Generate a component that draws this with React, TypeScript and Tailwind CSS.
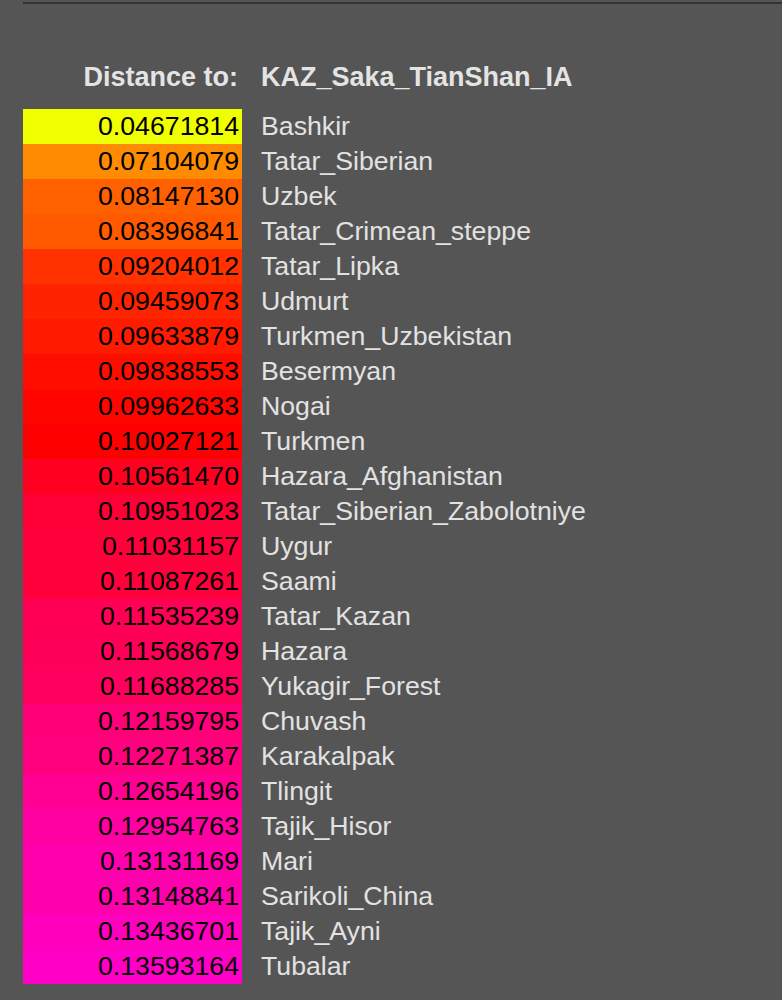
const rows: { value: string; name: string; bg: string }[] = [
  { value: "0.04671814", name: "Bashkir", bg: "bg-[#f0ff00]" },
  { value: "0.07104079", name: "Tatar_Siberian", bg: "bg-[#ff8c00]" },
  { value: "0.08147130", name: "Uzbek", bg: "bg-[#ff6000]" },
  { value: "0.08396841", name: "Tatar_Crimean_steppe", bg: "bg-[#ff5a00]" },
  { value: "0.09204012", name: "Tatar_Lipka", bg: "bg-[#ff3200]" },
  { value: "0.09459073", name: "Udmurt", bg: "bg-[#ff2400]" },
  { value: "0.09633879", name: "Turkmen_Uzbekistan", bg: "bg-[#ff1a00]" },
  { value: "0.09838553", name: "Besermyan", bg: "bg-[#ff0e00]" },
  { value: "0.09962633", name: "Nogai", bg: "bg-[#ff0500]" },
  { value: "0.10027121", name: "Turkmen", bg: "bg-[#ff0000]" },
  { value: "0.10561470", name: "Hazara_Afghanistan", bg: "bg-[#ff0020]" },
  { value: "0.10951023", name: "Tatar_Siberian_Zabolotniye", bg: "bg-[#ff0036]" },
  { value: "0.11031157", name: "Uygur", bg: "bg-[#ff003a]" },
  { value: "0.11087261", name: "Saami", bg: "bg-[#ff003d]" },
  { value: "0.11535239", name: "Tatar_Kazan", bg: "bg-[#ff0056]" },
  { value: "0.11568679", name: "Hazara", bg: "bg-[#ff0058]" },
  { value: "0.11688285", name: "Yukagir_Forest", bg: "bg-[#ff005f]" },
  { value: "0.12159795", name: "Chuvash", bg: "bg-[#ff0079]" },
  { value: "0.12271387", name: "Karakalpak", bg: "bg-[#ff007f]" },
  { value: "0.12654196", name: "Tlingit", bg: "bg-[#ff0093]" },
  { value: "0.12954763", name: "Tajik_Hisor", bg: "bg-[#ff00a2]" },
  { value: "0.13131169", name: "Mari", bg: "bg-[#ff00ac]" },
  { value: "0.13148841", name: "Sarikoli_China", bg: "bg-[#ff00ad]" },
  { value: "0.13436701", name: "Tajik_Ayni", bg: "bg-[#ff00bc]" },
  { value: "0.13593164", name: "Tubalar", bg: "bg-[#ff00c6]" },
];

const App = () => {
  return (
    <div className="min-h-screen bg-[#555555] font-['Liberation_Sans',Arial,sans-serif]">
      <div className="pt-[2px] pl-[23px]">
        <div className="h-[2px] bg-[#333333]" />
      </div>

      <div className="pl-[23px] pt-[53px]">
        {/* header */}
        <div className="grid grid-cols-[219px_1fr] gap-x-[19px] h-[30px] items-center text-[27px] font-bold text-[#e4e4e4]">
          <div className="text-right pr-[4px] whitespace-nowrap">Distance to:</div>
          <div className="whitespace-nowrap">KAZ_Saka_TianShan_IA</div>
        </div>

        {/* rows */}
        <div className="mt-[22px]">
          {rows.map((r) => (
            <div key={r.name} className="grid grid-cols-[219px_1fr] gap-x-[19px] h-[35px] text-[26.7px] leading-[35px]">
              <div className={`${r.bg} text-right pr-[3px] text-black`}>{r.value}</div>
              <div className="text-[#e2e2e2] whitespace-nowrap">{r.name}</div>
            </div>
          ))}
        </div>
      </div>
    </div>
  );
};

export default App;
